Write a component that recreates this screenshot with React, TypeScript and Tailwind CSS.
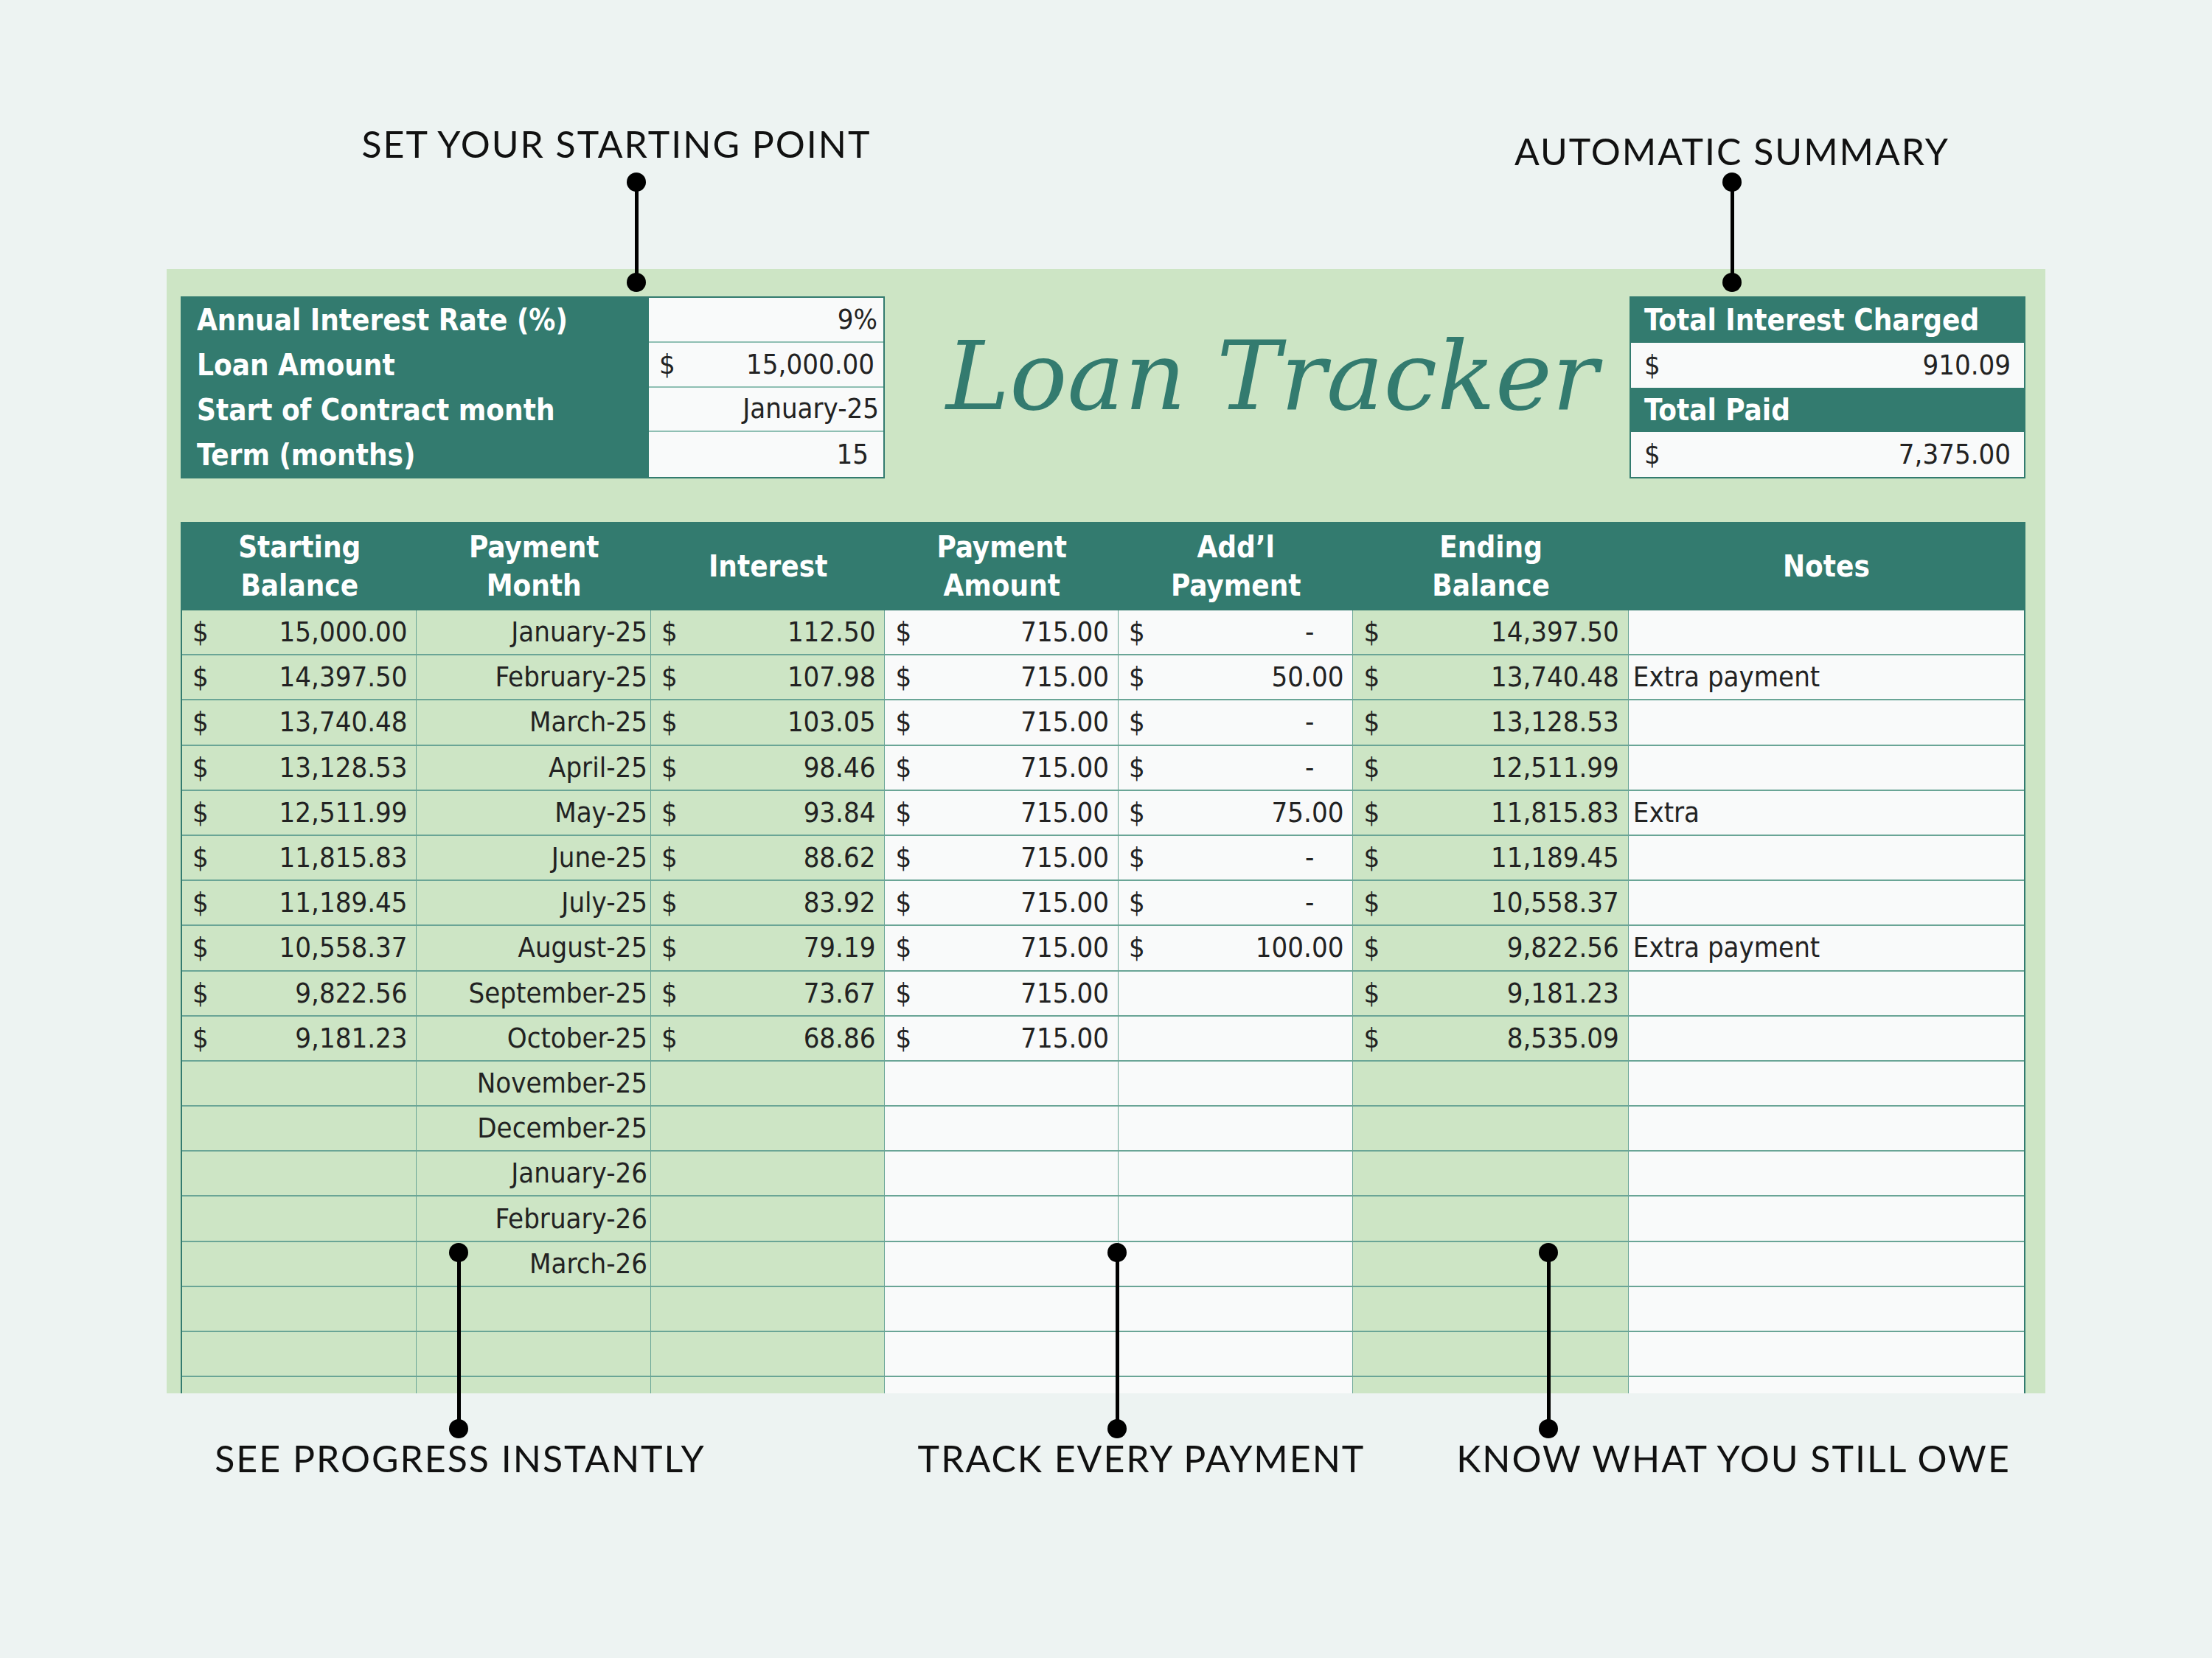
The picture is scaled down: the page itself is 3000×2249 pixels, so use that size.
import React from "react";

type Row = { sb?: string; m?: string; i?: string; p?: string; a?: string; aDollar?: boolean; e?: string; n?: string };

const rows: Row[] = [
  { sb: "15,000.00", m: "January-25", i: "112.50", p: "715.00", a: "-", aDollar: true, e: "14,397.50" },
  { sb: "14,397.50", m: "February-25", i: "107.98", p: "715.00", a: "50.00", aDollar: true, e: "13,740.48", n: "Extra payment" },
  { sb: "13,740.48", m: "March-25", i: "103.05", p: "715.00", a: "-", aDollar: true, e: "13,128.53" },
  { sb: "13,128.53", m: "April-25", i: "98.46", p: "715.00", a: "-", aDollar: true, e: "12,511.99" },
  { sb: "12,511.99", m: "May-25", i: "93.84", p: "715.00", a: "75.00", aDollar: true, e: "11,815.83", n: "Extra" },
  { sb: "11,815.83", m: "June-25", i: "88.62", p: "715.00", a: "-", aDollar: true, e: "11,189.45" },
  { sb: "11,189.45", m: "July-25", i: "83.92", p: "715.00", a: "-", aDollar: true, e: "10,558.37" },
  { sb: "10,558.37", m: "August-25", i: "79.19", p: "715.00", a: "100.00", aDollar: true, e: "9,822.56", n: "Extra payment" },
  { sb: "9,822.56", m: "September-25", i: "73.67", p: "715.00", e: "9,181.23" },
  { sb: "9,181.23", m: "October-25", i: "68.86", p: "715.00", e: "8,535.09" },
  { m: "November-25" },
  { m: "December-25" },
  { m: "January-26" },
  { m: "February-26" },
  { m: "March-26" },
  {},
  {},
  {},
];

const font = { fontFamily: '"DejaVu Sans Condensed", "DejaVu Sans", sans-serif' };
const annFont = { fontFamily: 'Lato, "Open Sans", sans-serif' };

function Money({ v, dash }: { v?: string; dash?: boolean }) {
  if (v === undefined) return null;
  return (
    <div className="flex w-full items-center justify-between pl-[14px] pr-[12px]">
      <span>$</span>
      <span className={dash && v === "-" ? "pr-[40px]" : ""}>{v}</span>
    </div>
  );
}

const G = "bg-[#cde5c5]";
const W = "bg-[#f9fafa]";
const cell = "h-[61.2px] flex items-center border-b-2 border-r border-[#6aa596] text-[38px] text-[#222]";

function Pin({ x, y1, y2 }: { x: number; y1: number; y2: number }) {
  return (
    <div className="absolute" style={{ left: x - 13, top: y1 - 13, width: 26, height: y2 - y1 + 26 }}>
      <div className="absolute left-[11px] top-[13px] w-[5px] bg-black" style={{ height: y2 - y1 }} />
      <div className="absolute left-0 top-0 h-[26px] w-[26px] rounded-full bg-black" />
      <div className="absolute left-0 bottom-0 h-[26px] w-[26px] rounded-full bg-black" />
    </div>
  );
}

function Ann({ cx, y, text }: { cx: number; y: number; text: string }) {
  return (
    <div className="absolute -translate-x-1/2 -translate-y-1/2 whitespace-nowrap text-[50px] tracking-[2px] text-[#111]" style={{ left: cx, top: y, ...annFont }}>
      {text}
    </div>
  );
}

export default function App() {
  const inputs: [string, React.ReactNode][] = [
    ["Annual Interest Rate (%)", <div className="w-full pr-[8px] text-right">9%</div>],
    ["Loan Amount", <Money v="15,000.00" />],
    ["Start of Contract month", <div className="w-full pr-[6px] text-right">January-25</div>],
    ["Term (months)", <div className="w-full pr-[20px] text-right">15</div>],
  ];
  const heads = ["Starting\nBalance", "Payment\nMonth", "Interest", "Payment\nAmount", "Add\u2019l\nPayment", "Ending\nBalance", "Notes"];
  const widths = ["w-[319px]", "w-[318px]", "w-[318px]", "w-[317px]", "w-[319px]", "w-[374px]", "w-[537px]"];
  return (
    <div className="relative h-[2249px] w-[3000px] overflow-hidden bg-[#edf3f2]" style={font}>
      <div className="ml-[226px] mt-[365px] h-[1525px] w-[2548px] overflow-hidden bg-[#cde5c5] pl-[19px] pr-[27px] pt-[37px]">
        <div className="flex h-[247px] items-stretch">
          <div className="flex w-[955px] border-2 border-[#337b6f] bg-[#337b6f]">
            <div className="flex w-[633px] flex-col font-bold text-[40px] text-white">
              {inputs.map(([l]) => (
                <div key={l} className="flex h-[60.75px] items-center pl-[20px]">{l}</div>
              ))}
            </div>
            <div className="flex flex-1 flex-col text-[38px] text-[#222]">
              {inputs.map(([l, v], i) => (
                <div key={l} className={`flex h-[60.75px] items-center ${W} ${i < 3 ? "border-b-2 border-[#8fbfb3]" : ""}`}>{v}</div>
              ))}
            </div>
          </div>
          <div className="flex flex-1 items-center justify-center">
            <div className="pb-[30px] pl-[40px] text-[130px] italic text-[#337b6f]" style={{ fontFamily: '"DejaVu Serif", "Liberation Serif", serif', fontWeight: 300 }}>
              Loan Tracker
            </div>
          </div>
          <div className="flex w-[537px] flex-col border-2 border-[#337b6f] text-[38px]">
            <div className="flex h-[60.75px] items-center bg-[#337b6f] pl-[18px] text-[40px] font-bold text-white">Total Interest Charged</div>
            <div className={`flex h-[60.75px] items-center ${W} text-[#222]`}><div className="flex w-full justify-between pl-[18px] pr-[18px]"><span>$</span><span>910.09</span></div></div>
            <div className="flex h-[60.75px] items-center bg-[#337b6f] pl-[18px] text-[40px] font-bold text-white">Total Paid</div>
            <div className={`flex h-[60.75px] items-center ${W} text-[#222]`}><div className="flex w-full justify-between pl-[18px] pr-[18px]"><span>$</span><span>7,375.00</span></div></div>
          </div>
        </div>
        <div className="mt-[59px] w-[2502px] border-l-2 border-r-2 border-[#337b6f]">
          <div className="flex h-[120px] bg-[#337b6f] text-[40px] font-bold leading-[52px] text-white">
            {heads.map((h, i) => (
              <div key={h} className={`${widths[i]} flex items-center justify-center whitespace-pre text-center`}>{h}</div>
            ))}
          </div>
          {rows.map((r, k) => (
            <div key={k} className="flex">
              <div className={`${widths[0]} ${cell} ${G}`}><Money v={r.sb} /></div>
              <div className={`${widths[1]} ${cell} ${G} justify-end pr-[4px]`}>{r.m}</div>
              <div className={`${widths[2]} ${cell} ${G}`}><Money v={r.i} /></div>
              <div className={`${widths[3]} ${cell} ${W}`}><Money v={r.p} /></div>
              <div className={`${widths[4]} ${cell} ${W}`}><Money v={r.a} dash /></div>
              <div className={`${widths[5]} ${cell} ${G}`}><Money v={r.e} /></div>
              <div className={`${widths[6]} ${cell} ${W} border-r-0 pl-[6px]`}>{r.n}</div>
            </div>
          ))}
        </div>
      </div>
      <Ann cx={836} y={195} text="SET YOUR STARTING POINT" />
      <Ann cx={2349} y={205} text="AUTOMATIC SUMMARY" />
      <Pin x={863} y1={247} y2={383} />
      <Pin x={2349} y1={247} y2={383} />
      <Pin x={622} y1={1699} y2={1938} />
      <Pin x={1515} y1={1699} y2={1938} />
      <Pin x={2100} y1={1699} y2={1938} />
      <Ann cx={624} y={1978} text="SEE PROGRESS INSTANTLY" />
      <Ann cx={1548} y={1978} text="TRACK EVERY PAYMENT" />
      <Ann cx={2351} y={1978} text="KNOW WHAT YOU STILL OWE" />
    </div>
  );
}
